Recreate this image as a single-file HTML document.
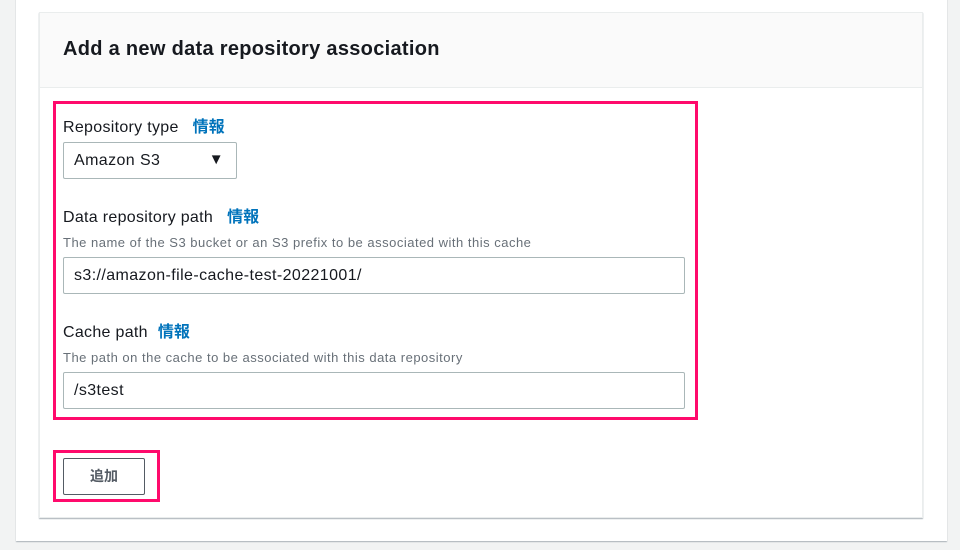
<!DOCTYPE html>
<html><head><meta charset="utf-8"><style>
*{box-sizing:border-box;margin:0;padding:0}
body{width:960px;height:550px;background:#f2f3f3;font-family:"Liberation Sans","Noto Sans CJK JP",sans-serif;color:#16191f;position:relative;overflow:hidden}
.outer{position:absolute;left:16px;top:-2px;width:931px;height:543px;background:#fff;box-shadow:0 1px 1px #aab2b8}
.card{position:absolute;left:39px;top:12px;width:884px;height:506px;background:#fff;border:1px solid #eaeded;box-shadow:0 1px 1px #aab2b8}
.hdr{position:absolute;left:0;top:0;right:0;height:75px;background:#fafafa;border-bottom:1px solid #eaeded}
.hdr h2{position:absolute;left:23px;top:25px;font-size:20px;letter-spacing:0.3px;font-weight:bold;color:#16191f}
.pink{position:absolute;border:3px solid #ff0a6c}
.lbl{position:absolute;left:63px;font-size:16px;letter-spacing:0.3px;color:#16191f}
.lbl b{color:#0073bb;font-weight:bold;margin-left:14px;letter-spacing:0}
.desc{position:absolute;left:63px;font-size:13px;letter-spacing:0.5px;color:#687078}
.inp{position:absolute;left:63px;width:622px;height:37px;border:1px solid #aab7b8;border-radius:2px;font-size:16px;letter-spacing:0.4px;padding:9px 10px;color:#16191f}
</style></head><body>
<div class="outer"></div>
<div class="card"><div class="hdr"><h2>Add a new data repository association</h2></div></div>
<div class="pink" style="left:53px;top:101px;width:645px;height:319px"></div>
<div class="lbl" style="top:113px">Repository type<b>情報</b></div>
<div class="inp" style="top:142px;width:174px;height:37px">Amazon S3<span style="position:absolute;right:12px;top:8px;font-size:15px">▼</span></div>
<div class="lbl" style="top:203px">Data repository path<b>情報</b></div>
<div class="desc" style="top:235px">The name of the S3 bucket or an S3 prefix to be associated with this cache</div>
<div class="inp" style="top:257px">s3://amazon-file-cache-test-20221001/</div>
<div class="lbl" style="top:318px">Cache path<b style="margin-left:10px">情報</b></div>
<div class="desc" style="top:350px">The path on the cache to be associated with this data repository</div>
<div class="inp" style="top:372px">/s3test</div>
<div class="pink" style="left:53px;top:450px;width:107px;height:52px"></div>
<div style="position:absolute;left:63px;top:458px;width:82px;height:37px;border:1px solid #545b64;border-radius:2px;text-align:center;line-height:35px;font-size:14px;font-weight:bold;color:#545b64">追加</div>
</body></html>
